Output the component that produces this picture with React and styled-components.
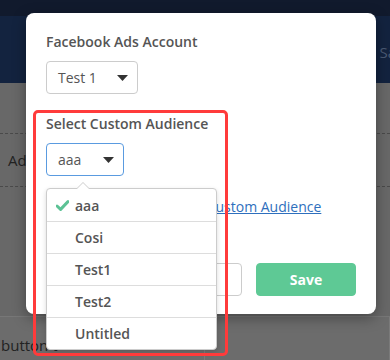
import React from "react";
import styled, { createGlobalStyle } from "styled-components";

const GlobalStyle = createGlobalStyle`
  html, body {
    margin: 0;
    padding: 0;
    background: #686868;
    font-family: "Open Sans", "Liberation Sans", sans-serif;
  }
`;

const audiences = ["aaa", "Cosi", "Test1", "Test2", "Untitled"];

const Caret = () => (
  <svg width="11" height="6" viewBox="0 0 11 6">
    <path d="M0 0 L11 0 L5.5 6 Z" fill="#333" />
  </svg>
);

const Check = () => (
  <svg width="13" height="11" viewBox="0 0 13 11">
    <path
      d="M1 6 L4.6 9.4 L12 1.6"
      fill="none"
      stroke="#5cc295"
      strokeWidth="3"
      strokeLinejoin="round"
      strokeLinecap="round"
    />
  </svg>
);

class App extends React.Component {
  render() {
    return (
      <Page>
        <GlobalStyle />
        <Header>
          <TopBar />
          <SubBar>
            <SubText>Sa</SubText>
          </SubBar>
        </Header>
        <Body>
          <DashedRow>
            <RowText>Add</RowText>
          </DashedRow>
          <Spacer />
          <FooterRow>
            <FooterCell>button t</FooterCell>
            <FooterCell />
          </FooterRow>
        </Body>

        <Modal>
          <Label>Facebook Ads Account</Label>
          <Select width={92}>
            Test 1
            <Caret />
          </Select>

          <Label top>Select Custom Audience</Label>
          <Select width={78} focused>
            aaa
            <Caret />
          </Select>

          <LinkLine>
            Can't see it? <a href="#new">Create New Custom Audience</a>
          </LinkLine>

          <Actions>
            <Button>Cancel</Button>
            <Button primary>Save</Button>
          </Actions>

          <Menu>
            {audiences.map((name, i) => (
              <MenuItem key={name}>
                <CheckSlot>{i === 0 && <Check />}</CheckSlot>
                {name}
              </MenuItem>
            ))}
          </Menu>
        </Modal>

        <Highlight />
      </Page>
    );
  }
}

const Page = styled.div`
  position: relative;
  width: 390px;
  height: 360px;
  overflow: hidden;
  display: flex;
  flex-direction: column;
  background: #686868;
`;

const Header = styled.div`
  display: flex;
  flex-direction: column;
`;

const TopBar = styled.div`
  height: 16px;
  background: #111a2d;
`;

const SubBar = styled.div`
  height: 67px;
  background: #13233f;
  display: flex;
  justify-content: flex-end;
  padding-top: 26px;
  box-sizing: border-box;
`;

const SubText = styled.span`
  font-size: 15px;
  color: #4a5a74;
  margin-right: -6px;
`;

const Body = styled.div`
  flex: 1;
  display: flex;
  flex-direction: column;
  padding-top: 50px;
`;

const DashedRow = styled.div`
  height: 52px;
  border-top: 1px dashed #4a4a4a;
  border-bottom: 1px dashed #4a4a4a;
  display: flex;
  align-items: center;
  padding-left: 8px;
`;

const RowText = styled.span`
  font-size: 15px;
  color: #222;
`;

const Spacer = styled.div`
  flex: 1;
`;

const FooterRow = styled.div`
  height: 43px;
  border-top: 1px solid #777;
  display: grid;
  grid-template-columns: 205px 1fr;
  background: #6c6c6c;
`;

const FooterCell = styled.div`
  border-right: 1px solid #7a7a7a;
  font-size: 15px;
  color: #222;
  padding: 18px 0 0 1px;
  white-space: nowrap;
  overflow: hidden;
`;

const Modal = styled.div`
  position: absolute;
  left: 26px;
  top: 13px;
  width: 350px;
  height: 301px;
  box-sizing: border-box;
  padding: 19px 20px 18px;
  background: #fff;
  border-radius: 8px;
  box-shadow: 0 4px 14px rgba(0, 0, 0, 0.35);
  display: flex;
  flex-direction: column;
  align-items: flex-start;
`;

const Label = styled.div`
  font-size: 14px;
  line-height: 20px;
  font-weight: 600;
  color: #555;
  margin-top: ${(p) => (p.top ? "20px" : "0")};
  margin-bottom: 9px;
`;

const Select = styled.div`
  width: ${(p) => p.width}px;
  height: 33px;
  box-sizing: border-box;
  border: 1px solid ${(p) => (p.focused ? "#5a9be0" : "#ccc")};
  border-radius: 4px;
  padding: 0 9px 0 11px;
  display: flex;
  align-items: center;
  justify-content: space-between;
  font-size: 14px;
  color: #555;
`;

const LinkLine = styled.div`
  margin-top: 21px;
  font-size: 14px;
  line-height: 20px;
  color: #555;
  white-space: nowrap;

  a {
    color: #2e6fbd;
    text-decoration: underline;
  }
`;

const Actions = styled.div`
  margin-top: auto;
  align-self: stretch;
  display: flex;
  justify-content: flex-end;
  gap: 14px;
`;

const Button = styled.button`
  width: 100px;
  height: 33px;
  border-radius: 4px;
  border: 1px solid ${(p) => (p.primary ? "#5ec995" : "#ccc")};
  background: ${(p) => (p.primary ? "#5ec995" : "#fff")};
  color: ${(p) => (p.primary ? "#fff" : "#555")};
  font-family: inherit;
  font-size: 14px;
  font-weight: 700;
`;

const Menu = styled.ul`
  position: absolute;
  left: 20px;
  top: 175px;
  width: 171px;
  margin: 0;
  padding: 0;
  list-style: none;
  background: #fff;
  border: 1px solid #ccc;
  border-radius: 4px;
  box-shadow: 0 2px 5px rgba(0, 0, 0, 0.15);
  box-sizing: border-box;

  &::before,
  &::after {
    content: "";
    position: absolute;
    left: 29px;
    width: 0;
    height: 0;
    border-left: 7px solid transparent;
    border-right: 7px solid transparent;
  }

  &::before {
    top: -7px;
    border-bottom: 7px solid #ccc;
  }

  &::after {
    top: -6px;
    border-bottom: 7px solid #fff;
  }
`;

const MenuItem = styled.li`
  height: 32px;
  box-sizing: border-box;
  display: flex;
  align-items: center;
  font-size: 14px;
  font-weight: 600;
  color: #555;
  border-top: 1px solid #ddd;

  &:first-child {
    border-top: none;
  }
`;

const CheckSlot = styled.span`
  width: 28px;
  padding-left: 9px;
  box-sizing: border-box;
  display: flex;
  align-items: center;
`;

const Highlight = styled.div`
  position: absolute;
  left: 33px;
  top: 110px;
  width: 195px;
  height: 246px;
  box-sizing: border-box;
  border: 3px solid #ff3b3b;
  border-radius: 5px;
  pointer-events: none;
`;

export default App;
